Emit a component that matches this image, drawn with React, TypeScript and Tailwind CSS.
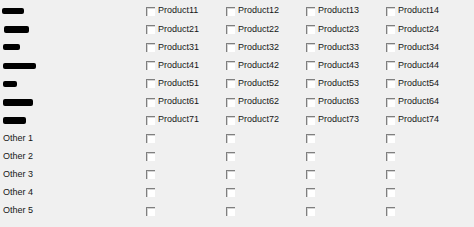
import React from "react";

const blobs = [
  { w: 22, ml: 2, h: 6 },
  { w: 25, ml: 4, h: 7 },
  { w: 17, ml: 3, h: 6 },
  { w: 33, ml: 3, h: 6 },
  { w: 14, ml: 3, h: 6 },
  { w: 30, ml: 3, h: 7 },
  { w: 23, ml: 3, h: 7 },
];

function Box() {
  return (
    <span className="inline-block w-[9px] h-[9px] bg-white border-t border-l border-[#7f7f7f] shadow-[inset_1px_1px_0_#d4d4d4] shrink-0" />
  );
}

export default function App() {
  const rows: { label: React.ReactNode; products: string[] | null }[] = [];
  blobs.forEach((b, i) => {
    rows.push({
      label: (
        <span
          className="inline-block bg-black rounded-[2px]"
          style={{ width: b.w, height: b.h, marginLeft: b.ml - 3 }}
        />
      ),
      products: [1, 2, 3, 4].map((c) => `Product${i + 1}${c}`),
    });
  });
  for (let i = 1; i <= 5; i++) rows.push({ label: `Other ${i}`, products: null });

  return (
    <div
      className="w-[474px] h-[227px] bg-[#f0f0f0] text-[#161616] text-[9px] pt-[2px] overflow-hidden"
      style={{ fontFamily: '"Liberation Sans", Arial, sans-serif' }}
    >
      {rows.map((r, i) => (
        <div key={i} className="flex items-center h-[18.2px]">
          <div className="w-[146px] pl-[3px] flex items-center">{r.label}</div>
          {[0, 1, 2, 3].map((c) => (
            <div key={c} className="w-[80px] flex items-center gap-[3px]">
              <Box />
              {r.products && <span>{r.products[c]}</span>}
            </div>
          ))}
        </div>
      ))}
    </div>
  );
}
